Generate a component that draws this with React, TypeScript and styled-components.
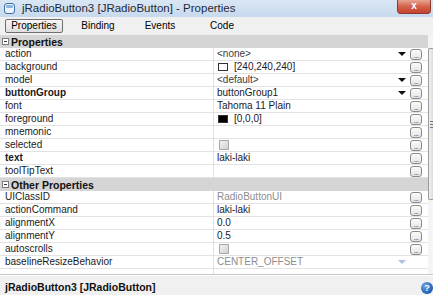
import styled, { createGlobalStyle } from 'styled-components';

type Kind = 'text' | 'color' | 'check' | 'combo';

interface Prop {
  name: string;
  value?: string;
  kind?: Kind;
  bold?: boolean;
  muted?: boolean;
  swatch?: string;
  disabled?: boolean;
  noButton?: boolean;
}

interface Section {
  title: string;
  rows: Prop[];
}

const SECTIONS: Section[] = [
  {
    title: 'Properties',
    rows: [
      { name: 'action', value: '<none>', kind: 'combo', muted: true },
      { name: 'background', value: '[240,240,240]', kind: 'color', swatch: '#ffffff' },
      { name: 'model', value: '<default>', kind: 'combo', muted: true },
      { name: 'buttonGroup', value: 'buttonGroup1', kind: 'combo', bold: true },
      { name: 'font', value: 'Tahoma 11 Plain' },
      { name: 'foreground', value: '[0,0,0]', kind: 'color', swatch: '#000000' },
      { name: 'mnemonic', value: '' },
      { name: 'selected', kind: 'check' },
      { name: 'text', value: 'laki-laki', bold: true },
      { name: 'toolTipText', value: '' }
    ]
  },
  {
    title: 'Other Properties',
    rows: [
      { name: 'UIClassID', value: 'RadioButtonUI', disabled: true },
      { name: 'actionCommand', value: 'laki-laki' },
      { name: 'alignmentX', value: '0.0' },
      { name: 'alignmentY', value: '0.5' },
      { name: 'autoscrolls', kind: 'check' },
      {
        name: 'baselineResizeBehavior',
        value: 'CENTER_OFFSET',
        kind: 'combo',
        disabled: true,
        noButton: true
      },
      // next row only peeks in under the fold
      { name: '', value: '', noButton: true }
    ]
  }
];

const TABS = ['Properties', 'Binding', 'Events', 'Code'];

const GlobalStyle = createGlobalStyle`
  html, body {
    margin: 0;
    padding: 0;
    background: #ffffff;
  }
  body {
    font-family: "Liberation Sans", Arial, sans-serif;
  }
`;

const Window = styled.div`
  width: 433px;
  height: 295px;
  overflow: hidden;
  display: flex;
  flex-direction: column;
  background: #f0f0f0;
`;

const TitleBar = styled.div`
  display: flex;
  align-items: flex-start;
  height: 17px;
  flex-shrink: 0;
  background: linear-gradient(180deg, #d9e6f4 0%, #cfdff0 60%, #c6d9ee 100%);
`;

const TitleIcon = styled.svg`
  width: 11px;
  height: 11px;
  margin: 3px 7px 0 4px;
  flex-shrink: 0;
`;

const TitleText = styled.span`
  font-size: 11.5px;
  line-height: 17px;
  color: #1e2a3a;
`;

const CloseButton = styled.div`
  margin-left: auto;
  margin-right: 2px;
  width: 32px;
  height: 13px;
  border: 1px solid #8a3a30;
  border-top: none;
  border-radius: 0 0 4px 4px;
  background: linear-gradient(180deg, #e8a592 0%, #d4624c 50%, #c5432c 100%);
  color: #ffffff;
  font-size: 10px;
  font-weight: 700;
  line-height: 12px;
  text-align: center;
`;

const TabBar = styled.div`
  display: flex;
  align-items: center;
  height: 18px;
  padding-left: 4px;
  flex-shrink: 0;
  background: #f0f0f0;
`;

const Tab = styled.div<{ active?: boolean }>`
  width: ${({ active }) => (active ? '56px' : '60px')};
  margin-right: ${({ active }) => (active ? '4px' : '0')};
  margin-left: ${({ active }) => (active ? '1px' : '0')};
  height: 12px;
  line-height: 12px;
  font-size: 10px;
  text-align: center;
  color: #000000;
  border: 1px solid ${({ active }) => (active ? '#6f6f6f' : 'transparent')};
  border-radius: 2px;
  background: ${({ active }) =>
    active ? 'linear-gradient(180deg, #f6f6f6 0%, #dedede 100%)' : 'transparent'};
`;

const Sheet = styled.div`
  display: flex;
  height: 239px;
  flex-shrink: 0;
  background: #ffffff;
`;

const List = styled.div`
  flex: 1;
  overflow: hidden;
`;

const Scrollbar = styled.div`
  width: 5px;
  flex-shrink: 0;
  background: #f4f4f4;
  padding-top: 13px;
`;

const Thumb = styled.div`
  height: 150px;
  border: 1px solid #9a9a9a;
  border-right: none;
  border-radius: 2px 0 0 2px;
  background: linear-gradient(90deg, #f2f2f2, #dcdcdc);
  display: flex;
  align-items: center;
  justify-content: flex-end;
`;

const Grip = styled.div`
  width: 3px;
  height: 5px;
  border-top: 1px solid #777;
  border-bottom: 1px solid #777;
  position: relative;
  &::after {
    content: '';
    position: absolute;
    left: 0;
    right: 0;
    top: 2px;
    border-top: 1px solid #777;
  }
`;

const SectionHeader = styled.div`
  display: flex;
  align-items: center;
  height: 13px;
  padding-left: 2px;
  background: #d5d5d5;
  font-size: 10.5px;
  font-weight: 700;
  color: #111111;
`;

const Toggle = styled.span`
  display: inline-block;
  box-sizing: border-box;
  width: 7px;
  height: 7px;
  margin-right: 2px;
  border: 1px solid #7a7a7a;
  background: #ffffff;
  position: relative;
  &::after {
    content: '';
    position: absolute;
    left: 1px;
    right: 1px;
    top: 2px;
    border-top: 1px solid #333333;
  }
`;

const Row = styled.div`
  display: grid;
  grid-template-columns: 214px 1fr 18px;
  height: 13px;
  box-sizing: border-box;
  border-bottom: 1px solid #e2e2e2;
  font-size: 10px;
  line-height: 12px;
`;

const NameCell = styled.div<{ bold?: boolean }>`
  padding-left: 5px;
  border-right: 1px solid #e2e2e2;
  color: #1a1a1a;
  font-weight: ${({ bold }) => (bold ? 700 : 400)};
  white-space: nowrap;
  overflow: hidden;
`;

const ValueCell = styled.div<{ tone: 'normal' | 'muted' | 'disabled' }>`
  display: flex;
  align-items: center;
  padding-left: 3px;
  padding-right: 4px;
  white-space: nowrap;
  overflow: hidden;
  color: ${({ tone }) =>
    tone === 'disabled' ? '#8d8d8d' : tone === 'muted' ? '#3b3b3b' : '#1a1a2a'};
`;

const Swatch = styled.span<{ color: string }>`
  display: inline-block;
  box-sizing: border-box;
  width: 10px;
  height: 8px;
  margin: 0 6px 0 1px;
  border: 1px solid #333333;
  background: ${({ color }) => color};
`;

const CheckBox = styled.span`
  display: inline-block;
  box-sizing: border-box;
  width: 10px;
  height: 10px;
  margin-left: 2px;
  border: 1px solid #a8a8a8;
  background: linear-gradient(135deg, #f2f2f2, #d0d0d0);
`;

const ComboArrow = styled.span<{ disabled?: boolean }>`
  margin-left: auto;
  width: 0;
  height: 0;
  border-left: 4px solid transparent;
  border-right: 4px solid transparent;
  border-top: 4px solid ${({ disabled }) => (disabled ? '#a9c3e0' : '#111111')};
`;

const ButtonCell = styled.div`
  display: flex;
  align-items: center;
`;

const DotsButton = styled.span`
  box-sizing: border-box;
  width: 12px;
  height: 11px;
  border: 1px solid #8a8a8a;
  border-radius: 3px;
  background: linear-gradient(180deg, #fbfbfb 0%, #e4e4e4 100%);
  font-size: 7px;
  line-height: 11px;
  text-align: center;
  color: #333333;
  letter-spacing: -0.5px;
`;

const Footer = styled.div`
  flex: 1;
  display: flex;
  align-items: center;
  justify-content: space-between;
  padding-left: 5px;
  border-top: 1px solid #c8c8c8;
  box-shadow: inset 0 1px 0 #ffffff;
  background: #f0f0f0;
`;

const FooterText = styled.span`
  font-size: 10.5px;
  font-weight: 700;
  color: #111111;
  margin-top: 4px;
`;

const HelpIcon = styled.span`
  width: 12px;
  height: 12px;
  margin-top: 5px;
  border-radius: 50%;
  background: radial-gradient(circle at 35% 30%, #6aa3e6 0%, #1f5fb8 70%, #174a92 100%);
  color: #ffffff;
  font-size: 9px;
  font-weight: 700;
  line-height: 12px;
  text-align: center;
`;

function PropertyRow({ prop }: { prop: Prop }) {
  const { name, value, kind = 'text', bold, muted, swatch, disabled, noButton } = prop;
  const tone = disabled ? 'disabled' : muted ? 'muted' : 'normal';

  return (
    <Row>
      <NameCell bold={bold}>{name}</NameCell>
      <ValueCell tone={tone}>
        {kind === 'color' && swatch && <Swatch color={swatch} />}
        {kind === 'check' ? <CheckBox /> : value}
        {kind === 'combo' && <ComboArrow disabled={disabled} />}
      </ValueCell>
      <ButtonCell>{!noButton && <DotsButton>...</DotsButton>}</ButtonCell>
    </Row>
  );
}

export default function App() {
  return (
    <>
      <GlobalStyle />
      <Window>
        <TitleBar>
          <TitleIcon viewBox="0 0 11 11">
            <rect x="0.5" y="0.5" width="10" height="10" rx="2.5" fill="#eaf2fb" stroke="#3f6fa8" />
            <rect x="2" y="2" width="7" height="3" rx="1" fill="#8fb4de" />
          </TitleIcon>
          <TitleText>jRadioButton3 [JRadioButton] - Properties</TitleText>
          <CloseButton>x</CloseButton>
        </TitleBar>
        <TabBar>
          {TABS.map((tab, i) => (
            <Tab key={tab} active={i === 0}>
              {tab}
            </Tab>
          ))}
        </TabBar>
        <Sheet>
          <List>
            {SECTIONS.map((section) => (
              <div key={section.title}>
                <SectionHeader>
                  <Toggle />
                  {section.title}
                </SectionHeader>
                {section.rows.map((prop, i) => (
                  <PropertyRow key={prop.name || i} prop={prop} />
                ))}
              </div>
            ))}
          </List>
          <Scrollbar>
            <Thumb>
              <Grip />
            </Thumb>
          </Scrollbar>
        </Sheet>
        <Footer>
          <FooterText>jRadioButton3 [JRadioButton]</FooterText>
          <HelpIcon>?</HelpIcon>
        </Footer>
      </Window>
    </>
  );
}
